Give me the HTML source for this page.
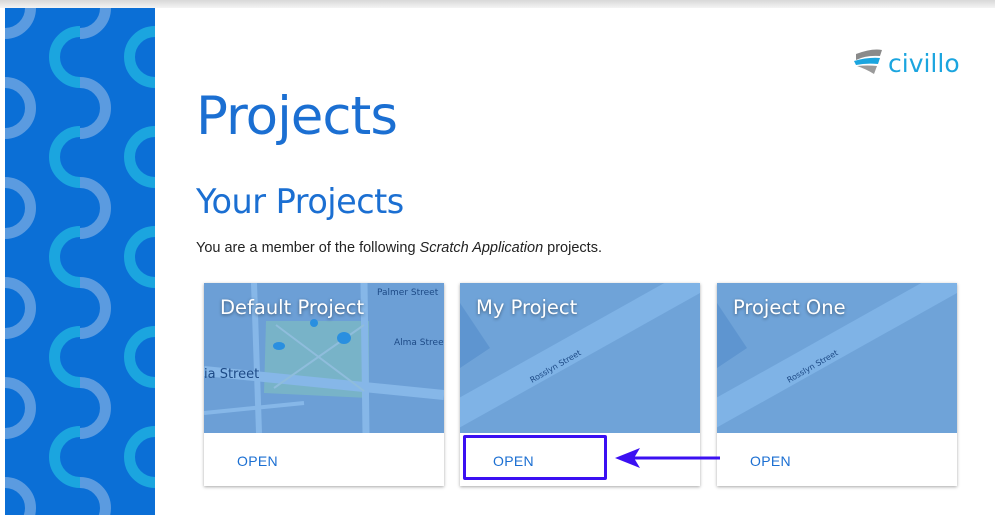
<!DOCTYPE html>
<html><head><style>
*{margin:0;padding:0;box-sizing:border-box}
html,body{width:995px;height:515px;overflow:hidden}
body{background:#fff;font-family:"Liberation Sans","DejaVu Sans",sans-serif;position:relative}
.top{position:absolute;left:0;top:0;width:995px;height:8px;background:linear-gradient(#d8d8d8,#f4f4f4)}
.side{position:absolute;left:5px;top:8px;width:150px;height:507px;overflow:hidden}
h1{position:absolute;left:196px;top:86px;font-size:53px;font-weight:normal;color:#1b6fd2;font-family:"DejaVu Sans","Liberation Sans",sans-serif;letter-spacing:-1px}
h2{position:absolute;left:196px;top:182px;font-size:33.5px;font-weight:normal;color:#1b6fd2;font-family:"DejaVu Sans","Liberation Sans",sans-serif;letter-spacing:-0.5px}
p.t{position:absolute;left:196px;top:240px;font-size:14.5px;color:#222}
.card{position:absolute;top:283px;width:240px;height:203px;background:#fff;box-shadow:0 1px 3px rgba(0,0,0,.35)}
.card .img{height:150px;background:#6fa3d9;position:relative;overflow:hidden}
.card .img svg{position:absolute;left:0;top:0}
.card .ttl{position:absolute;left:16px;top:13px;color:#fff;font-size:19.5px;text-shadow:0 1px 3px rgba(0,0,0,.45);font-family:"DejaVu Sans","Liberation Sans",sans-serif}
.card .open{position:absolute;left:33px;top:170px;font-size:14px;color:#1b6fd2;letter-spacing:.3px}
.logo{position:absolute;left:852px;top:46px}
</style></head><body>
<div class="top"></div>
<div class="side">
<svg width="150" height="507" viewBox="5 8 150 507">
<rect x="0" y="0" width="200" height="600" fill="#0b6fd6"/>
<g fill="none" stroke-width="11">
<g stroke="#5b9be0">
<path d="M5 -17.5 A25.5 25.5 0 0 1 5 33.5"/><path d="M80 -17.5 A25.5 25.5 0 0 1 80 33.5"/>
<path d="M5 82.5 A25.5 25.5 0 0 1 5 133.5"/><path d="M80 82.5 A25.5 25.5 0 0 1 80 133.5"/>
<path d="M5 182.5 A25.5 25.5 0 0 1 5 233.5"/><path d="M80 182.5 A25.5 25.5 0 0 1 80 233.5"/>
<path d="M5 282.5 A25.5 25.5 0 0 1 5 333.5"/><path d="M80 282.5 A25.5 25.5 0 0 1 80 333.5"/>
<path d="M5 382.5 A25.5 25.5 0 0 1 5 433.5"/><path d="M80 382.5 A25.5 25.5 0 0 1 80 433.5"/>
<path d="M5 482.5 A25.5 25.5 0 0 1 5 533.5"/><path d="M80 482.5 A25.5 25.5 0 0 1 80 533.5"/>
</g>
<g stroke="#1ba5df">
<path d="M80 31.5 A25.5 25.5 0 0 0 80 82.5"/><path d="M155 31.5 A25.5 25.5 0 0 0 155 82.5"/>
<path d="M80 131.5 A25.5 25.5 0 0 0 80 182.5"/><path d="M155 131.5 A25.5 25.5 0 0 0 155 182.5"/>
<path d="M80 231.5 A25.5 25.5 0 0 0 80 282.5"/><path d="M155 231.5 A25.5 25.5 0 0 0 155 282.5"/>
<path d="M80 331.5 A25.5 25.5 0 0 0 80 382.5"/><path d="M155 331.5 A25.5 25.5 0 0 0 155 382.5"/>
<path d="M80 431.5 A25.5 25.5 0 0 0 80 482.5"/><path d="M155 431.5 A25.5 25.5 0 0 0 155 482.5"/>
</g></g></svg>
</div>
<svg class="logo" width="125" height="34" viewBox="0 0 125 34">
<path d="M4 8 Q20 2 30 4 L28 10 Q14 9 4 14 Z" fill="#8a8a8a"/>
<path d="M2 15 Q16 11 28 12 L26 18 Q14 17 4 19 Z" fill="#1ba5df"/>
<path d="M5 20 Q16 19 25 20 L22 28 Q14 23 5 20 Z" fill="#9a9a9a"/>
<text x="36" y="26" font-family="DejaVu Sans,Liberation Sans,sans-serif" font-size="25" fill="#1ba5df">civillo</text>
</svg>
<h1>Projects</h1>
<h2>Your Projects</h2>
<p class="t">You are a member of the following <i>Scratch Application</i> projects.</p>

<div class="card" style="left:204px">
<div class="img"><svg width="240" height="150">
<rect width="240" height="150" fill="#6c9fd6"/>
<path d="M62 38 L165 38 L165 115 L60 110 Z" fill="#78b3c8"/>
<path d="M0 88 L240 112" stroke="#86b7e8" stroke-width="10"/>
<path d="M160 0 L162 150" stroke="#86b7e8" stroke-width="7"/>
<path d="M50 0 L55 150" stroke="#86b7e8" stroke-width="6"/>
<path d="M0 130 L100 120" stroke="#86b7e8" stroke-width="4"/>
<path d="M72 42 L160 108 M160 42 L70 105" stroke="#8fbddc" stroke-width="2"/>
<circle cx="110" cy="40" r="4" fill="#2a8fe0"/><ellipse cx="140" cy="55" rx="7" ry="6" fill="#2a8fe0"/><ellipse cx="75" cy="63" rx="6" ry="4" fill="#2a8fe0"/>
<text x="0" y="95" font-size="13" fill="#1d4a86" font-family="DejaVu Sans,sans-serif">ia Street</text>
<text x="190" y="62" font-size="9" fill="#1d4a86" font-family="DejaVu Sans,sans-serif">Alma Street</text>
<text x="173" y="12" font-size="9" fill="#1d4a86" font-family="DejaVu Sans,sans-serif">Palmer Street</text>
</svg><div class="ttl">Default Project</div></div>
<div class="open">OPEN</div></div>

<div class="card" style="left:460px">
<div class="img"><svg width="240" height="150">
<rect width="240" height="150" fill="#6fa3d8"/>
<path d="M-10 120 L240 -20 L240 10 L-10 150 Z" fill="#7fb3e6"/>
<path d="M0 20 L30 65 L0 85 Z" fill="#5e95d0"/>
<text x="0" y="0" transform="translate(72 100) rotate(-30)" font-size="8" fill="#1d4a86" font-family="DejaVu Sans,sans-serif">Rosslyn Street</text>
</svg><div class="ttl">My Project</div></div>
<div class="open">OPEN</div></div>

<div class="card" style="left:717px">
<div class="img"><svg width="240" height="150">
<rect width="240" height="150" fill="#6fa3d8"/>
<path d="M-10 120 L240 -20 L240 10 L-10 150 Z" fill="#7fb3e6"/>
<path d="M0 20 L30 65 L0 85 Z" fill="#5e95d0"/>
<text x="0" y="0" transform="translate(72 100) rotate(-30)" font-size="8" fill="#1d4a86" font-family="DejaVu Sans,sans-serif">Rosslyn Street</text>
</svg><div class="ttl">Project One</div></div>
<div class="open">OPEN</div></div>

<div style="position:absolute;left:463px;top:435px;width:144px;height:45px;border:3px solid #3b10f2;border-radius:2px"></div>
<svg style="position:absolute;left:610px;top:445px" width="115" height="26">
<line x1="22" y1="13" x2="110" y2="13" stroke="#3b10f2" stroke-width="3"/>
<path d="M5 13 L30 3 L24 13 L30 23 Z" fill="#3b10f2"/>
</svg>
</body></html>
